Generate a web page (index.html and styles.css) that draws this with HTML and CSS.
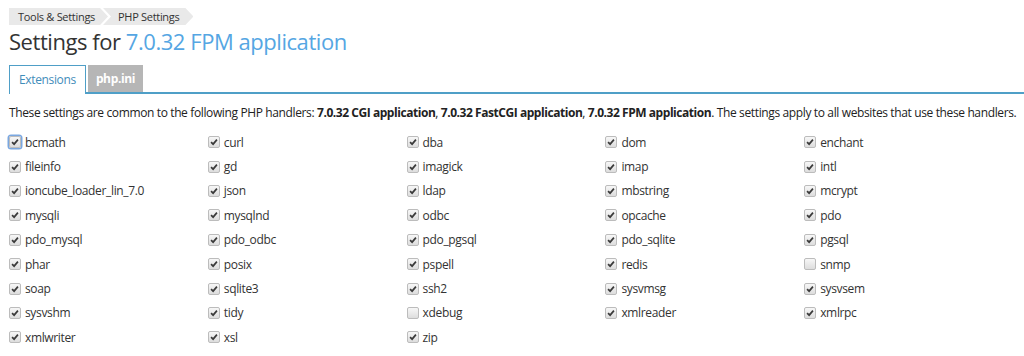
FILE: index.html
```html
<!DOCTYPE html>
<html lang="en">
<head>
    <meta charset="UTF-8">
    <title>PHP Settings</title>
    <link rel="stylesheet" href="styles.css">
</head>
<body>
    <div class="page">
        <div class="breadcrumbs">
            <span class="crumb">Tools &amp; Settings</span>
            <span class="crumb">PHP Settings</span>
        </div>

        <h1 class="title">Settings for <span class="accent">7.0.32 FPM application</span></h1>

        <div class="tabs">
            <div class="tab active">Extensions</div>
            <div class="tab">php.ini</div>
        </div>

        <p class="hint">These settings are common to the following PHP handlers: <b>7.0.32 CGI application</b>, <b>7.0.32 FastCGI application</b>, <b>7.0.32 FPM application</b>. The settings apply to all websites that use these handlers.</p>

        <div class="ext-grid" id="ext-grid"></div>
    </div>

    <script>
        // extension list, false = not enabled
        const extensions = [
            ['bcmath', true], ['curl', true], ['dba', true], ['dom', true], ['enchant', true],
            ['fileinfo', true], ['gd', true], ['imagick', true], ['imap', true], ['intl', true],
            ['ioncube_loader_lin_7.0', true], ['json', true], ['ldap', true], ['mbstring', true], ['mcrypt', true],
            ['mysqli', true], ['mysqlnd', true], ['odbc', true], ['opcache', true], ['pdo', true],
            ['pdo_mysql', true], ['pdo_odbc', true], ['pdo_pgsql', true], ['pdo_sqlite', true], ['pgsql', true],
            ['phar', true], ['posix', true], ['pspell', true], ['redis', true], ['snmp', false],
            ['soap', true], ['sqlite3', true], ['ssh2', true], ['sysvmsg', true], ['sysvsem', true],
            ['sysvshm', true], ['tidy', true], ['xdebug', false], ['xmlreader', true], ['xmlrpc', true],
            ['xmlwriter', true], ['xsl', true], ['zip', true]
        ];

        const tick = '<svg viewBox="0 0 9 9" width="8" height="8"><path d="M1.2 4.6 L3.5 6.9 L7.8 1.8" fill="none" stroke="#3a3a3a" stroke-width="1.9"/></svg>';
        const grid = document.getElementById('ext-grid');

        extensions.forEach(([name, on], i) => {
            const item = document.createElement('label');
            item.className = 'ext';
            const box = document.createElement('span');
            box.className = 'box' + (i === 0 ? ' focused' : '');
            if (on) box.innerHTML = tick;
            item.appendChild(box);
            item.appendChild(document.createTextNode(name));
            grid.appendChild(item);
        });
    </script>
</body>
</html>
```

FILE: styles.css
```css
* {
    margin: 0;
    padding: 0;
    box-sizing: border-box;
}

body {
    background: #fff;
    font-family: 'Open Sans', 'Noto Sans', sans-serif;
    font-size: 12px;
    letter-spacing: -0.35px;
    color: #222;
}

.page {
    padding: 8px 0 0 9px;
}

.breadcrumbs {
    display: flex;
    height: 17px;
}

.crumb {
    display: flex;
    align-items: center;
    height: 17px;
    padding: 0 13px 0 9px;
    margin-right: 3px;
    background: #e9e9e9;
    color: #333;
    font-size: 11px;
    letter-spacing: -0.3px;
    clip-path: polygon(0 0, calc(100% - 8px) 0, 100% 50%, calc(100% - 8px) 100%, 0 100%);
}

.crumb + .crumb {
    padding-left: 15px;
    padding-right: 14px;
    margin-left: -8px;
    clip-path: polygon(0 0, calc(100% - 8px) 0, 100% 50%, calc(100% - 8px) 100%, 0 100%, 8px 50%);
}

.title {
    font-size: 22px;
    font-weight: 400;
    letter-spacing: -0.45px;
    color: #333;
    line-height: 30px;
    margin-top: 1px;
}

.title .accent {
    color: #55a6e3;
}

.tabs {
    display: flex;
    gap: 2px;
    margin-top: 9px;
    border-bottom: 2px solid #4f9fc7;
}

.tab {
    height: 27px;
    padding: 0 8px;
    display: flex;
    align-items: center;
    background: #b6b6b6;
    color: #fff;
    font-weight: 700;
}

.tab.active {
    background: #fff;
    color: #3f8dba;
    font-weight: 400;
    padding: 0 9px 2px;
    border: 1px solid #4f9fc7;
    border-bottom: none;
    margin-bottom: -2px;
    height: 29px;
}

.hint {
    margin-top: 10px;
    line-height: 17px;
    color: #222;
    white-space: nowrap;
    letter-spacing: -0.37px;
}

.hint b {
    font-weight: 700;
    letter-spacing: -0.45px;
}

.ext-grid {
    display: grid;
    grid-template-columns: repeat(5, 198.8px);
    grid-auto-rows: 24.4px;
    margin-top: 9px;
}

.ext {
    display: flex;
    align-items: center;
    gap: 4px;
    color: #333;
}

.box {
    width: 12px;
    height: 12px;
    border: 1px solid #bcbcbc;
    border-radius: 2px;
    background: linear-gradient(#f7f7f7, #dddddd);
    display: flex;
    align-items: center;
    justify-content: center;
}

.box.focused {
    box-shadow: 0 0 0 1.5px #7aa7e0;
}
```
